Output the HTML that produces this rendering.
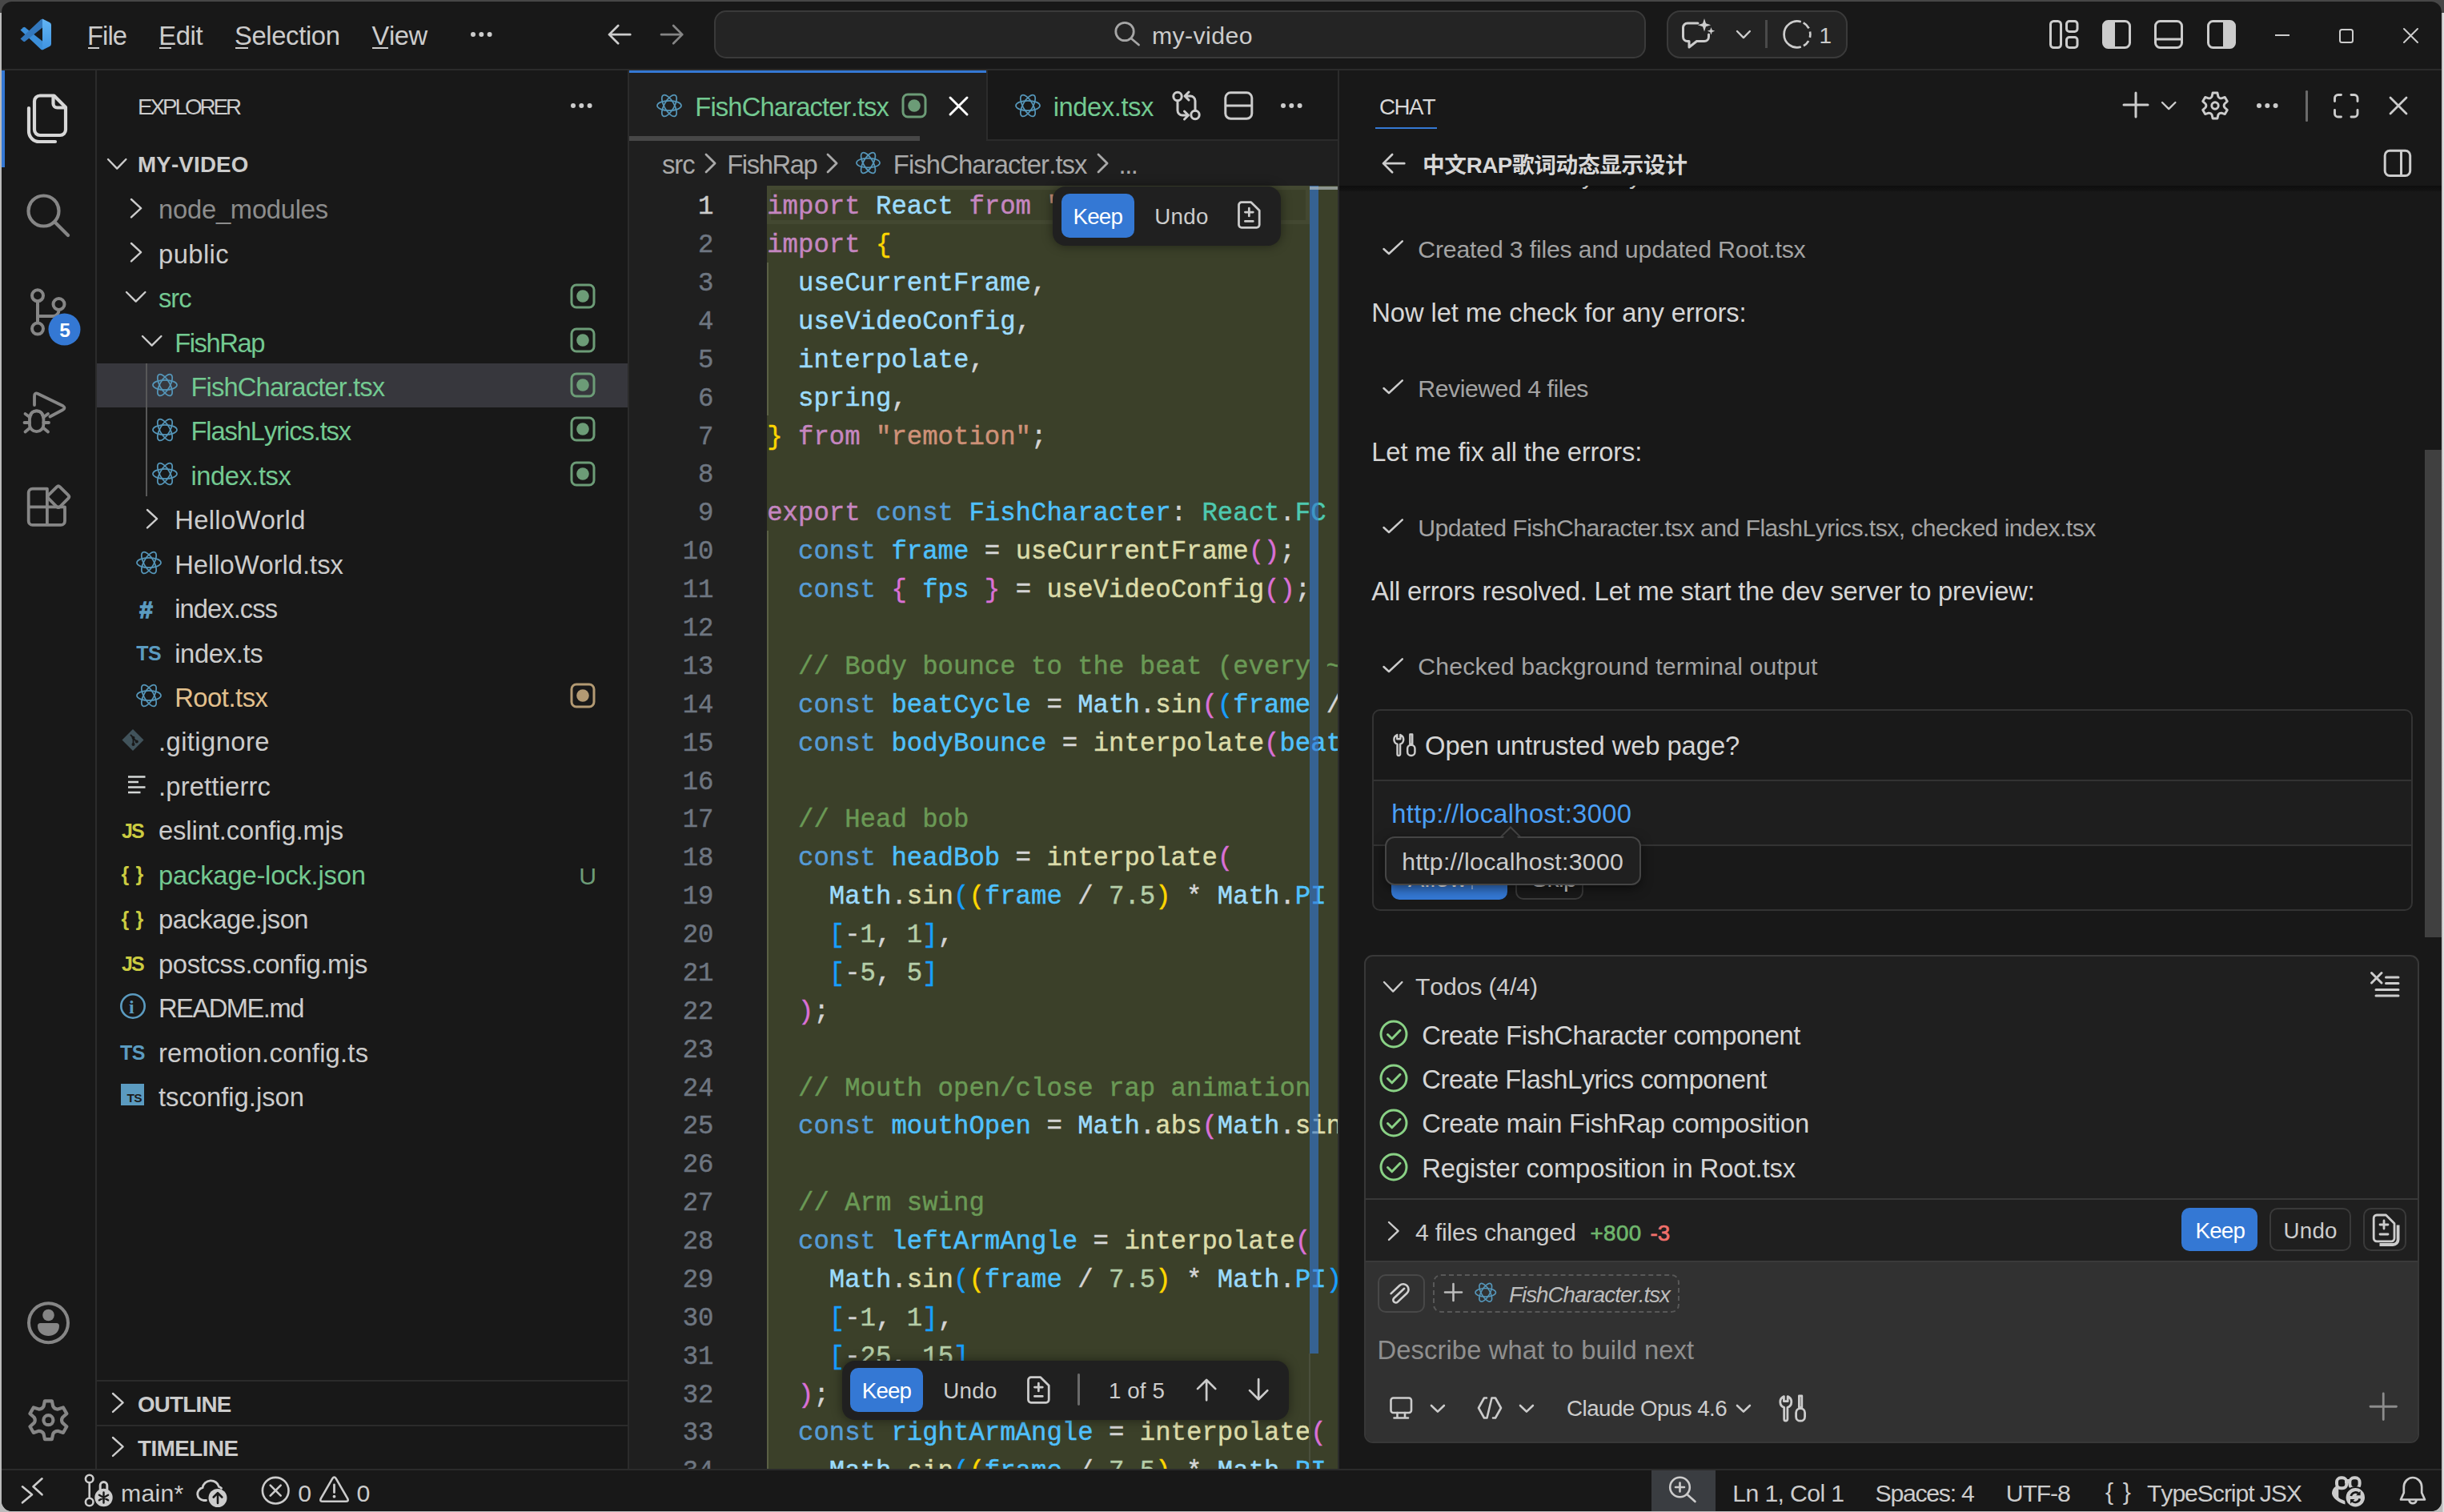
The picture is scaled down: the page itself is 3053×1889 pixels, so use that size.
<!DOCTYPE html><html><head><meta charset="utf-8"><title>VS Code</title><style>
html,body{margin:0;padding:0;}
body{width:3053px;height:1889px;background:#bbbbbb;position:relative;font-kerning:none;-webkit-font-smoothing:antialiased;}
#page{position:absolute;left:0;top:0;width:3053px;height:1889px;overflow:hidden;background:#181818;clip-path:inset(2px 3px 1px 2px round 13px);}
#page div,#page span.s,#page span.m,#page svg{position:absolute;}
#page svg{overflow:visible;}
.s{font-family:"Liberation Sans",sans-serif;line-height:1;white-space:pre;}
.hs{-webkit-text-stroke:1.3px #5b9bc0;}
.sb1{-webkit-text-stroke:0.7px #6eb56c;}.sb2{-webkit-text-stroke:0.7px #f0706c;}
.m{font-family:"Liberation Mono",monospace;line-height:1;white-space:pre;-webkit-text-stroke-width:0.45px;}
#topband{position:absolute;left:0;top:0;width:3053px;height:16px;background:#474747;}#rstrip{position:absolute;left:3049px;top:16px;width:4px;height:1873px;background:linear-gradient(90deg,#b4b4b4 0,#bdbdbd 35%,#cacaca 60%,#ececec 100%);}

</style></head><body><div id="topband"></div><div id="rstrip"></div><div id="page"><div style="left:0px;top:86px;width:3053px;height:2px;background:#2b2b2b;"></div><svg style="left:24px;top:23px;" width="40" height="40" viewBox="0 0 40 40"><defs><linearGradient id="lg1" x1="0" y1="0" x2="0" y2="1"><stop offset="0" stop-color="#62b5f5"/><stop offset="1" stop-color="#3f93e0"/></linearGradient></defs>
<path d="M1.5 14.5 L5.2 11.2 Q6.2 10.4 7.3 11.2 L29 28.5 L29 39.2 Q28.2 39.6 27.2 38.7 Z" fill="#3c8fd9"/>
<path d="M1.5 25.5 L5.2 28.8 Q6.2 29.6 7.3 28.8 L29 11.5 L29 0.8 Q28.2 0.4 27.2 1.3 Z" fill="#3378bd"/>
<path d="M29 0.6 L38 4.9 Q40 5.9 40 8 V32 Q40 34.1 38 35.1 L29 39.4 Z" fill="url(#lg1)"/></svg><span id="t1" class="s " style="left:109.00px;top:28.57px;font-size:32.76px;color:#cccccc;letter-spacing:-0.942px;">File</span><span id="t2" class="s " style="left:198.30px;top:28.57px;font-size:32.76px;color:#cccccc;letter-spacing:-0.393px;">Edit</span><span id="t3" class="s " style="left:293.00px;top:28.57px;font-size:32.76px;color:#cccccc;letter-spacing:-0.357px;">Selection</span><span id="t4" class="s " style="left:464.50px;top:28.57px;font-size:32.76px;color:#cccccc;letter-spacing:-0.458px;">View</span><div style="left:109.5px;top:58.5px;width:14.5px;height:2.6px;background:#cccccc;"></div><div style="left:198.5px;top:58.5px;width:15.5px;height:2.6px;background:#cccccc;"></div><div style="left:293.5px;top:58.5px;width:16.5px;height:2.6px;background:#cccccc;"></div><div style="left:465px;top:58.5px;width:19.5px;height:2.6px;background:#cccccc;"></div><svg style="left:587.4000000000001px;top:39.0px;" width="28.6" height="8.0" viewBox="0 0 28.6 8.0"><circle cx="4.0" cy="4.0" r="3.0" fill="#cccccc"/><circle cx="14.3" cy="4.0" r="3.0" fill="#cccccc"/><circle cx="24.6" cy="4.0" r="3.0" fill="#cccccc"/></svg><svg style="left:758.15px;top:29.65px;" width="31.3" height="26.3" viewBox="0 0 31.3 26.3"><path d="M29.3 13.15 H3 M14.15 2 L3 13.15 L14.15 24.3" fill="none" stroke="#cccccc" stroke-width="2.7" stroke-linecap="round" stroke-linejoin="round"/></svg><svg style="left:823.85px;top:29.65px;" width="31.3" height="26.3" viewBox="0 0 31.3 26.3"><path d="M2 13.15 H28.3 M17.15 2 L28.3 13.15 L17.15 24.3" fill="none" stroke="#858585" stroke-width="2.7" stroke-linecap="round" stroke-linejoin="round"/></svg><div style="left:892.3px;top:13.2px;width:1163.4px;height:59.7px;background:#242424;border:2px solid #3a3a3a;border-radius:15px;box-sizing:border-box;"></div><svg style="left:1390px;top:25px;" width="36" height="34" viewBox="0 0 36 34"><circle cx="15" cy="14.5" r="11.2" fill="none" stroke="#a6a6a6" stroke-width="2.8"/><path d="M23 23 L32.5 31" stroke="#a6a6a6" stroke-width="2.8" stroke-linecap="round"/></svg><span id="t5" class="s " style="left:1439.00px;top:29.80px;font-size:30.24px;color:#cccccc;letter-spacing:0.399px;">my-video</span><div style="left:2081.8px;top:12.9px;width:226.5px;height:60px;background:#232323;border:2px solid #3a3a3a;border-radius:17px;box-sizing:border-box;"></div><svg style="left:2099px;top:22px;" width="46" height="40" viewBox="0 0 46 40"><g fill="none" stroke="#cccccc" stroke-width="3" stroke-linecap="round" stroke-linejoin="round">
<path d="M22 7 H9 a5.5 5.5 0 0 0 -5.5 5.5 V24 a5.5 5.5 0 0 0 5.5 5.5 H11 V37 L20.5 29.5 H30 a5.5 5.5 0 0 0 5.5 -5.5 V21"/></g>
<path d="M30 1 L32 7.2 L38.2 9.2 L32 11.2 L30 17.4 L28 11.2 L21.8 9.2 L28 7.2 Z" fill="#cccccc"/>
<path d="M38.5 12 L39.7 15.6 L43.3 16.8 L39.7 18 L38.5 21.6 L37.3 18 L33.7 16.8 L37.3 15.6 Z" fill="#cccccc"/></svg><svg style="left:2168.05px;top:37.35px;" width="19.9" height="12.1" viewBox="0 0 19.9 12.1"><polyline points="2,2 9.95,10.1 17.9,2" fill="none" stroke="#cccccc" stroke-width="2.4" stroke-linecap="round" stroke-linejoin="round"/></svg><div style="left:2205px;top:25px;width:2.5px;height:35px;background:#4a4a4a;"></div><svg style="left:2225px;top:23px;" width="40" height="40" viewBox="0 0 40 40"><path d="M24.79 4.22 A16.4 16.4 0 1 0 24.79 35.58 M27.70 5.42 A16.4 16.4 0 0 1 34.61 12.45 M36.04 16.49 A16.4 16.4 0 0 1 35.91 23.87 M34.20 28.10 A16.4 16.4 0 0 1 27.95 34.24" fill="none" stroke="#cccccc" stroke-width="2.7"/></svg><span id="t6" class="s " style="left:2272.50px;top:31.00px;font-size:28px;color:#cccccc;letter-spacing:-0.578px;">1</span><svg style="left:2560px;top:25px;" width="36" height="36" viewBox="0 0 36 36"><g fill="none" stroke="#cccccc" stroke-width="3"><rect x="1.5" y="1.5" width="13" height="33" rx="4"/><rect x="21.5" y="1.5" width="13.5" height="13" rx="3.5"/><rect x="21.5" y="21.5" width="13.5" height="13" rx="3.5"/></g></svg><svg style="left:2625.5px;top:25px;" width="36" height="36" viewBox="0 0 36 36"><rect x="1.5" y="1.5" width="33" height="33" rx="6" fill="none" stroke="#cccccc" stroke-width="3"/><path d="M7.5 1.5 H16 V34.5 H7.5 a6 6 0 0 1 -6 -6 V7.5 a6 6 0 0 1 6 -6 Z" fill="#cccccc"/></svg><svg style="left:2691.2px;top:25px;" width="36" height="36" viewBox="0 0 36 36"><rect x="1.5" y="1.5" width="33" height="33" rx="6" fill="none" stroke="#cccccc" stroke-width="3"/><path d="M1.5 24 H34.5" stroke="#cccccc" stroke-width="3"/></svg><svg style="left:2756.8px;top:25px;" width="36" height="36" viewBox="0 0 36 36"><rect x="1.5" y="1.5" width="33" height="33" rx="6" fill="none" stroke="#cccccc" stroke-width="3"/><path d="M28.5 1.5 H20 V34.5 H28.5 a6 6 0 0 0 6 -6 V7.5 a6 6 0 0 0 -6 -6 Z" fill="#cccccc"/></svg><div style="left:2842px;top:43px;width:18px;height:2.2px;background:#cccccc;"></div><div style="left:2922px;top:35.5px;width:18px;height:18px;border:2.2px solid #cccccc;border-radius:3.5px;box-sizing:border-box;"></div><svg style="left:3001.2px;top:33.5px;" width="21" height="21" viewBox="0 0 21 21"><path d="M2 2 L19 19 M19 2 L2 19" stroke="#cccccc" stroke-width="2" stroke-linecap="round" fill="none"/></svg><div style="left:119px;top:88px;width:2px;height:1747px;background:#2b2b2b;"></div><div style="left:2px;top:88px;width:3.5px;height:121px;background:#3478d4;"></div><svg style="left:31px;top:115px;" width="56" height="66" viewBox="0 0 56 66"><g fill="none" stroke="#d7d7d7" stroke-width="4.2" stroke-linecap="round" stroke-linejoin="round">
<path d="M19 4.5 H36.5 L51 19 V47 a7 7 0 0 1 -7 7 H19 a7 7 0 0 1 -7 -7 V11.5 a7 7 0 0 1 7 -7 Z"/>
<path d="M35.5 5 V14.5 a5 5 0 0 0 5 5 H50.5"/>
<path d="M5 20 V49 a13 13 0 0 0 13 13 H38"/></g></svg><svg style="left:31px;top:240px;" width="60" height="60" viewBox="0 0 60 60"><circle cx="23.5" cy="23.5" r="19" fill="none" stroke="#868686" stroke-width="4.2"/><path d="M37.5 37.5 L54 54" stroke="#868686" stroke-width="4.2" stroke-linecap="round"/></svg><svg style="left:34px;top:357px;" width="54" height="66" viewBox="0 0 54 66"><g fill="none" stroke="#868686" stroke-width="4">
<circle cx="13" cy="12.3" r="7"/><circle cx="39.5" cy="23" r="7"/><circle cx="13" cy="53.6" r="7"/>
<path d="M13 19.3 V46.6 M13 38 H32 a7.5 7.5 0 0 0 7.5 -7.5 V30"/></g></svg><svg style="left:60.2px;top:390.5px;" width="41" height="41" viewBox="0 0 41 41"><circle cx="20.5" cy="20.5" r="20" fill="#3478d4"/></svg><span id="t7" class="s " style="left:74.30px;top:400.66px;font-size:24.5px;color:#ffffff;font-weight:700;letter-spacing:-0.141px;">5</span><svg style="left:27px;top:486px;" width="58" height="58" viewBox="0 0 58 58"><g fill="none" stroke="#868686" stroke-width="3.8" stroke-linecap="round" stroke-linejoin="round">
<path d="M16 20 V9 Q16 4 20.5 6 L51.5 21 Q55.5 23.5 51.5 26 L35.5 34.5"/>
<path d="M10 36 a8.7 8.7 0 0 1 17.4 0 V44.5 a8.7 8.7 0 0 1 -17.4 0 Z"/>
<path d="M11.5 32.8 a7.2 5.5 0 0 1 14.4 0"/>
<path d="M10 42 H3.5 M27.4 42 H34 M10.5 48.5 L4.5 53.5 M27 48.5 L33 53.5 M10.5 35.5 L4.5 31 M27 35.5 L33 31"/></g></svg><svg style="left:30px;top:600px;" width="62" height="62" viewBox="0 0 62 62"><g fill="none" stroke="#868686" stroke-width="3.8" stroke-linejoin="round">
<path d="M10.7 10.6 H28.9 V33.4 H51 V50.9 a5 5 0 0 1 -5 5 H10.7 a5 5 0 0 1 -5 -5 V15.6 a5 5 0 0 1 5 -5 Z M5.7 33.4 H28.9 V55.9"/>
<path d="M40.9 8.3 Q42.9 6.3 44.9 8.3 L55.3 18.7 Q57.3 20.7 55.3 22.7 L44.9 33.1 Q42.9 35.1 40.9 33.1 L30.5 22.7 Q28.5 20.7 30.5 18.7 Z"/></g></svg><svg style="left:32px;top:1624px;" width="58" height="58" viewBox="0 0 58 58"><circle cx="28.5" cy="28.7" r="24.5" fill="none" stroke="#868686" stroke-width="4"/><circle cx="28.5" cy="19" r="7.3" fill="#868686"/><path d="M15 32.5 a3.5 3.5 0 0 1 3.5 -3.5 H38.5 a3.5 3.5 0 0 1 3.5 3.5 C42 41 35 45 28.5 45 C22 45 15 41 15 32.5 Z" fill="#868686"/></svg><svg style="left:30px;top:1744px;" width="60" height="60" viewBox="0 0 60 60"><path d="M24.51 13.08 L25.97 6.31 L34.83 6.31 L36.29 13.08 Q38.18 16.72 42.28 16.54 L48.88 14.42 L53.31 22.09 L48.17 26.75 Q45.97 30.20 48.17 33.65 L53.31 38.31 L48.88 45.98 L42.28 43.86 Q38.18 43.68 36.29 47.32 L34.83 54.09 L25.97 54.09 L24.51 47.32 Q22.62 43.68 18.52 43.86 L11.92 45.98 L7.49 38.31 L12.63 33.65 Q14.83 30.20 12.63 26.75 L7.49 22.09 L11.92 14.42 L18.52 16.54 Q22.62 16.72 24.51 13.08 Z" fill="none" stroke="#868686" stroke-width="4.2" stroke-linejoin="round"/><circle cx="30.4" cy="30.2" r="6.0" fill="none" stroke="#868686" stroke-width="4.2"/></svg><div style="left:784px;top:88px;width:2px;height:1747px;background:#2b2b2b;"></div><span id="t8" class="s " style="left:172.00px;top:120.34px;font-size:27.72px;color:#cccccc;letter-spacing:-2.986px;">EXPLORER</span><svg style="left:712.4000000000001px;top:127.69999999999999px;" width="28.6" height="8.0" viewBox="0 0 28.6 8.0"><circle cx="4.0" cy="4.0" r="3.0" fill="#cccccc"/><circle cx="14.3" cy="4.0" r="3.0" fill="#cccccc"/><circle cx="24.6" cy="4.0" r="3.0" fill="#cccccc"/></svg><svg style="left:133.0px;top:197.2px;" width="26.4" height="15.6" viewBox="0 0 26.4 15.6"><polyline points="2,2 13.2,13.6 24.4,2" fill="none" stroke="#cccccc" stroke-width="2.4" stroke-linecap="round" stroke-linejoin="round"/></svg><span id="t9" class="s " style="left:172.00px;top:191.94px;font-size:27.72px;color:#cccccc;font-weight:700;letter-spacing:0.178px;">MY-VIDEO</span><div style="left:121px;top:453.6px;width:663px;height:55.44px;background:#37373d;"></div><div style="left:181.5px;top:453.6px;width:2px;height:166.32px;background:#585858;"></div><svg style="left:161.95px;top:246.84000000000003px;" width="16.1" height="26.4" viewBox="0 0 16.1 26.4"><polyline points="2,2 14.1,13.2 2,24.4" fill="none" stroke="#cccccc" stroke-width="2.4" stroke-linecap="round" stroke-linejoin="round"/></svg><span id="t10" class="s " style="left:198.00px;top:246.21px;font-size:32.76px;color:#8c8c8c;letter-spacing:-0.244px;">node_modules</span><svg style="left:161.95px;top:302.28px;" width="16.1" height="26.4" viewBox="0 0 16.1 26.4"><polyline points="2,2 14.1,13.2 2,24.4" fill="none" stroke="#cccccc" stroke-width="2.4" stroke-linecap="round" stroke-linejoin="round"/></svg><span id="t11" class="s " style="left:198.00px;top:301.65px;font-size:32.76px;color:#cccccc;letter-spacing:0.413px;">public</span><svg style="left:155.8px;top:362.62px;" width="27.4" height="15.6" viewBox="0 0 27.4 15.6"><polyline points="2,2 13.7,13.6 25.4,2" fill="none" stroke="#cccccc" stroke-width="2.4" stroke-linecap="round" stroke-linejoin="round"/></svg><span id="t12" class="s " style="left:198.00px;top:357.09px;font-size:32.76px;color:#73c991;letter-spacing:-1.078px;">src</span><svg style="left:712.3px;top:353.92px;" width="32" height="32" viewBox="0 0 32 32"><rect x="2" y="2" width="28" height="28" rx="6" fill="none" stroke="#6c9c77" stroke-width="3"/><circle cx="16" cy="16" r="7.8" fill="#6c9c77"/></svg><svg style="left:176.0px;top:418.05999999999995px;" width="27.4" height="15.6" viewBox="0 0 27.4 15.6"><polyline points="2,2 13.7,13.6 25.4,2" fill="none" stroke="#cccccc" stroke-width="2.4" stroke-linecap="round" stroke-linejoin="round"/></svg><span id="t13" class="s " style="left:218.20px;top:412.53px;font-size:32.76px;color:#73c991;letter-spacing:-1.437px;">FishRap</span><svg style="left:712.3px;top:409.35999999999996px;" width="32" height="32" viewBox="0 0 32 32"><rect x="2" y="2" width="28" height="28" rx="6" fill="none" stroke="#6c9c77" stroke-width="3"/><circle cx="16" cy="16" r="7.8" fill="#6c9c77"/></svg><svg style="left:188.9px;top:464.3px;" width="33" height="33" viewBox="-17.0 -17.0 33 33"><ellipse cx="0" cy="0" rx="15.00" ry="6.16" transform="rotate(0)" fill="none" stroke="#5596b9" stroke-width="1.75"/><ellipse cx="0" cy="0" rx="15.00" ry="6.16" transform="rotate(60)" fill="none" stroke="#5596b9" stroke-width="1.75"/><ellipse cx="0" cy="0" rx="15.00" ry="6.16" transform="rotate(120)" fill="none" stroke="#5596b9" stroke-width="1.75"/></svg><span id="t14" class="s " style="left:238.40px;top:467.97px;font-size:32.76px;color:#73c991;letter-spacing:-0.870px;">FishCharacter.tsx</span><svg style="left:712.3px;top:464.8px;" width="32" height="32" viewBox="0 0 32 32"><rect x="2" y="2" width="28" height="28" rx="6" fill="none" stroke="#6c9c77" stroke-width="3"/><circle cx="16" cy="16" r="7.8" fill="#6c9c77"/></svg><svg style="left:188.9px;top:519.74px;" width="33" height="33" viewBox="-17.0 -17.0 33 33"><ellipse cx="0" cy="0" rx="15.00" ry="6.16" transform="rotate(0)" fill="none" stroke="#5596b9" stroke-width="1.75"/><ellipse cx="0" cy="0" rx="15.00" ry="6.16" transform="rotate(60)" fill="none" stroke="#5596b9" stroke-width="1.75"/><ellipse cx="0" cy="0" rx="15.00" ry="6.16" transform="rotate(120)" fill="none" stroke="#5596b9" stroke-width="1.75"/></svg><span id="t15" class="s " style="left:238.40px;top:523.41px;font-size:32.76px;color:#73c991;letter-spacing:-1.121px;">FlashLyrics.tsx</span><svg style="left:712.3px;top:520.24px;" width="32" height="32" viewBox="0 0 32 32"><rect x="2" y="2" width="28" height="28" rx="6" fill="none" stroke="#6c9c77" stroke-width="3"/><circle cx="16" cy="16" r="7.8" fill="#6c9c77"/></svg><svg style="left:188.9px;top:575.18px;" width="33" height="33" viewBox="-17.0 -17.0 33 33"><ellipse cx="0" cy="0" rx="15.00" ry="6.16" transform="rotate(0)" fill="none" stroke="#5596b9" stroke-width="1.75"/><ellipse cx="0" cy="0" rx="15.00" ry="6.16" transform="rotate(60)" fill="none" stroke="#5596b9" stroke-width="1.75"/><ellipse cx="0" cy="0" rx="15.00" ry="6.16" transform="rotate(120)" fill="none" stroke="#5596b9" stroke-width="1.75"/></svg><span id="t16" class="s " style="left:238.40px;top:578.85px;font-size:32.76px;color:#73c991;letter-spacing:-0.466px;">index.tsx</span><svg style="left:712.3px;top:575.6800000000001px;" width="32" height="32" viewBox="0 0 32 32"><rect x="2" y="2" width="28" height="28" rx="6" fill="none" stroke="#6c9c77" stroke-width="3"/><circle cx="16" cy="16" r="7.8" fill="#6c9c77"/></svg><svg style="left:182.14999999999998px;top:634.92px;" width="16.1" height="26.4" viewBox="0 0 16.1 26.4"><polyline points="2,2 14.1,13.2 2,24.4" fill="none" stroke="#cccccc" stroke-width="2.4" stroke-linecap="round" stroke-linejoin="round"/></svg><span id="t17" class="s " style="left:218.20px;top:634.29px;font-size:32.76px;color:#cccccc;letter-spacing:0.337px;">HelloWorld</span><svg style="left:168.7px;top:686.06px;" width="33" height="33" viewBox="-17.0 -17.0 33 33"><ellipse cx="0" cy="0" rx="15.00" ry="6.16" transform="rotate(0)" fill="none" stroke="#5596b9" stroke-width="1.75"/><ellipse cx="0" cy="0" rx="15.00" ry="6.16" transform="rotate(60)" fill="none" stroke="#5596b9" stroke-width="1.75"/><ellipse cx="0" cy="0" rx="15.00" ry="6.16" transform="rotate(120)" fill="none" stroke="#5596b9" stroke-width="1.75"/></svg><span id="t18" class="s " style="left:218.20px;top:689.73px;font-size:32.76px;color:#cccccc;letter-spacing:-0.031px;">HelloWorld.tsx</span><span id="t19" class="s hs" style="left:173.70px;top:746.50px;font-size:30px;color:#5b9bc0;font-weight:700;font-style:italic;letter-spacing:6.312px;">#</span><span id="t20" class="s " style="left:218.20px;top:745.17px;font-size:32.76px;color:#cccccc;letter-spacing:-0.953px;">index.css</span><span id="t21" class="s " style="left:170.20px;top:804.18px;font-size:25px;color:#5b9bc0;font-weight:700;letter-spacing:-0.477px;">TS</span><span id="t22" class="s " style="left:218.20px;top:800.61px;font-size:32.76px;color:#cccccc;letter-spacing:-0.357px;">index.ts</span><svg style="left:168.7px;top:852.38px;" width="33" height="33" viewBox="-17.0 -17.0 33 33"><ellipse cx="0" cy="0" rx="15.00" ry="6.16" transform="rotate(0)" fill="none" stroke="#5596b9" stroke-width="1.75"/><ellipse cx="0" cy="0" rx="15.00" ry="6.16" transform="rotate(60)" fill="none" stroke="#5596b9" stroke-width="1.75"/><ellipse cx="0" cy="0" rx="15.00" ry="6.16" transform="rotate(120)" fill="none" stroke="#5596b9" stroke-width="1.75"/></svg><span id="t23" class="s " style="left:218.20px;top:856.05px;font-size:32.76px;color:#e2c08d;letter-spacing:-0.489px;">Root.tsx</span><svg style="left:712.3px;top:852.88px;" width="32" height="32" viewBox="0 0 32 32"><rect x="2" y="2" width="28" height="28" rx="6" fill="none" stroke="#b39a73" stroke-width="3"/><circle cx="16" cy="16" r="7.8" fill="#b39a73"/></svg><svg style="left:150.5px;top:909.82px;" width="30" height="29" viewBox="0 0 30 29"><path d="M15 1 L28.5 14.5 L15 28 L1.5 14.5 Z" fill="#41535b"/><g stroke="#181818" stroke-width="1.8" fill="none"><path d="M12 8 L15.5 11.5 V20 M15.5 12.5 L19.5 16.2"/></g><circle cx="15.5" cy="11.7" r="2" fill="#181818"/><circle cx="15.5" cy="20" r="2" fill="#181818"/><circle cx="19.8" cy="16.5" r="2" fill="#181818"/></svg><span id="t24" class="s " style="left:198.00px;top:911.49px;font-size:32.76px;color:#cccccc;letter-spacing:0.413px;">.gitignore</span><svg style="left:159.0px;top:967.7600000000001px;" width="24" height="24" viewBox="0 0 24 24"><g stroke="#d4d7d6" stroke-width="2.6"><path d="M1 2.5 H22.5 M1 9 H14 M1 15.5 H22.5 M1 22 H16.5"/></g></svg><span id="t25" class="s " style="left:198.00px;top:966.93px;font-size:32.76px;color:#cccccc;letter-spacing:0.162px;">.prettierrc</span><span id="t26" class="s " style="left:152.00px;top:1025.94px;font-size:25px;color:#cbcb41;font-weight:700;letter-spacing:-1.797px;">JS</span><span id="t27" class="s " style="left:198.00px;top:1022.37px;font-size:32.76px;color:#cccccc;letter-spacing:-0.109px;">eslint.config.mjs</span><span id="t28" class="s " style="left:151.50px;top:1080.38px;font-size:25px;color:#cbcb41;font-weight:700;letter-spacing:0.698px;">{ }</span><span id="t29" class="s " style="left:198.00px;top:1077.81px;font-size:32.76px;color:#73c991;letter-spacing:-0.201px;">package-lock.json</span><span id="t30" class="s " style="left:723.30px;top:1079.94px;font-size:30.24px;color:#6c9c77;letter-spacing:-3.344px;">U</span><span id="t31" class="s " style="left:151.50px;top:1135.82px;font-size:25px;color:#cbcb41;font-weight:700;letter-spacing:0.698px;">{ }</span><span id="t32" class="s " style="left:198.00px;top:1133.25px;font-size:32.76px;color:#cccccc;letter-spacing:-0.492px;">package.json</span><span id="t33" class="s " style="left:152.00px;top:1192.26px;font-size:25px;color:#cbcb41;font-weight:700;letter-spacing:-1.797px;">JS</span><span id="t34" class="s " style="left:198.00px;top:1188.69px;font-size:32.76px;color:#cccccc;letter-spacing:-0.367px;">postcss.config.mjs</span><svg style="left:148.5px;top:1240.46px;" width="34" height="34" viewBox="0 0 34 34"><circle cx="17" cy="17" r="14.7" fill="none" stroke="#5b9bc0" stroke-width="2.6"/></svg><span id="t35" class="s " style="left:160.90px;top:1245.54px;font-size:24px;color:#5b9bc0;font-weight:700;font-family:'Liberation Serif',serif;letter-spacing:2.828px;">i</span><span id="t36" class="s " style="left:198.00px;top:1244.13px;font-size:32.76px;color:#cccccc;letter-spacing:-1.543px;">README.md</span><span id="t37" class="s " style="left:150.00px;top:1303.14px;font-size:25px;color:#5b9bc0;font-weight:700;letter-spacing:-0.477px;">TS</span><span id="t38" class="s " style="left:198.00px;top:1299.57px;font-size:32.76px;color:#cccccc;letter-spacing:0.209px;">remotion.config.ts</span><div style="left:151.0px;top:1354.34px;width:28.5px;height:26.5px;background:#5b9bc0;"></div><span id="t39" class="s " style="left:158.50px;top:1364.12px;font-size:15.5px;color:#1b1b1b;font-weight:700;letter-spacing:-0.656px;">TS</span><span id="t40" class="s " style="left:198.00px;top:1355.01px;font-size:32.76px;color:#cccccc;letter-spacing:-0.005px;">tsconfig.json</span><div style="left:121px;top:1724px;width:663px;height:2px;background:#2b2b2b;"></div><div style="left:121px;top:1779.5px;width:663px;height:2px;background:#2b2b2b;"></div><svg style="left:138.7px;top:1738.55px;" width="16.6" height="26.9" viewBox="0 0 16.6 26.9"><polyline points="2,2 14.6,13.45 2,24.9" fill="none" stroke="#cccccc" stroke-width="2.4" stroke-linecap="round" stroke-linejoin="round"/></svg><span id="t41" class="s " style="left:172.00px;top:1740.94px;font-size:27.72px;color:#cccccc;font-weight:700;letter-spacing:-0.737px;">OUTLINE</span><svg style="left:138.7px;top:1793.55px;" width="16.6" height="26.9" viewBox="0 0 16.6 26.9"><polyline points="2,2 14.6,13.45 2,24.9" fill="none" stroke="#cccccc" stroke-width="2.4" stroke-linecap="round" stroke-linejoin="round"/></svg><span id="t42" class="s " style="left:172.00px;top:1796.14px;font-size:27.72px;color:#cccccc;font-weight:700;letter-spacing:-0.482px;">TIMELINE</span><div style="left:786px;top:88px;width:885px;height:1747px;background:#1f1f1f;"></div><div style="left:1232px;top:88px;width:439px;height:86px;background:#181818;"></div><div style="left:1232px;top:88px;width:2px;height:88px;background:#2b2b2b;"></div><div style="left:1232px;top:173.8px;width:439px;height:2.2px;background:#2b2b2b;"></div><div style="left:786px;top:88px;width:446px;height:3.3px;background:#3478d4;"></div><svg style="left:819.0px;top:114.5px;" width="33" height="33" viewBox="-17.0 -17.0 33 33"><ellipse cx="0" cy="0" rx="15.00" ry="6.16" transform="rotate(0)" fill="none" stroke="#5596b9" stroke-width="1.75"/><ellipse cx="0" cy="0" rx="15.00" ry="6.16" transform="rotate(60)" fill="none" stroke="#5596b9" stroke-width="1.75"/><ellipse cx="0" cy="0" rx="15.00" ry="6.16" transform="rotate(120)" fill="none" stroke="#5596b9" stroke-width="1.75"/></svg><span id="t43" class="s " style="left:868.30px;top:117.67px;font-size:32.76px;color:#73c991;letter-spacing:-0.870px;">FishCharacter.tsx</span><svg style="left:1125.6px;top:116px;" width="32" height="32" viewBox="0 0 32 32"><rect x="2" y="2" width="28" height="28" rx="6" fill="none" stroke="#6c9c77" stroke-width="3"/><circle cx="16" cy="16" r="7.8" fill="#6c9c77"/></svg><svg style="left:1184.7px;top:119.9px;" width="25" height="25" viewBox="0 0 25 25"><path d="M2 2 L23 23 M23 2 L2 23" stroke="#ffffff" stroke-width="3" stroke-linecap="round" fill="none"/></svg><div style="left:786px;top:169.5px;width:363px;height:6.5px;background:#474747;"></div><svg style="left:1267.2px;top:114.5px;" width="33" height="33" viewBox="-17.0 -17.0 33 33"><ellipse cx="0" cy="0" rx="15.00" ry="6.16" transform="rotate(0)" fill="none" stroke="#5596b9" stroke-width="1.75"/><ellipse cx="0" cy="0" rx="15.00" ry="6.16" transform="rotate(60)" fill="none" stroke="#5596b9" stroke-width="1.75"/><ellipse cx="0" cy="0" rx="15.00" ry="6.16" transform="rotate(120)" fill="none" stroke="#5596b9" stroke-width="1.75"/></svg><span id="t44" class="s " style="left:1315.80px;top:117.67px;font-size:32.76px;color:#73c991;letter-spacing:-0.466px;">index.tsx</span><svg style="left:1462px;top:112px;" width="40" height="40" viewBox="0 0 40 40"><g fill="none" stroke="#cccccc" stroke-width="3" stroke-linecap="round" stroke-linejoin="round">
<circle cx="9" cy="8.5" r="5.2"/><circle cx="31" cy="31.5" r="5.2"/>
<path d="M9 14 V26 a6 6 0 0 0 6 6 H22 M17.5 27 L22.5 32 L17.5 37"/>
<path d="M31 26 V14 a6 6 0 0 0 -6 -6 H18.5 M23 3 L18 8 L23 13"/></g></svg><svg style="left:1529px;top:114px;" width="37" height="37" viewBox="0 0 37 37"><rect x="1.8" y="1.8" width="33" height="32.5" rx="6.5" fill="none" stroke="#cccccc" stroke-width="3"/><path d="M2 18 H35" stroke="#cccccc" stroke-width="3"/></svg><svg style="left:1598.7px;top:127.69999999999999px;" width="28.6" height="8.0" viewBox="0 0 28.6 8.0"><circle cx="4.0" cy="4.0" r="3.0" fill="#cccccc"/><circle cx="14.3" cy="4.0" r="3.0" fill="#cccccc"/><circle cx="24.6" cy="4.0" r="3.0" fill="#cccccc"/></svg><span id="t45" class="s " style="left:827.00px;top:190.27px;font-size:32.76px;color:#a9a9a9;letter-spacing:-1.078px;">src</span><svg style="left:880.45px;top:191.35000000000002px;" width="15.1" height="25.9" viewBox="0 0 15.1 25.9"><polyline points="2,2 13.1,12.95 2,23.9" fill="none" stroke="#a9a9a9" stroke-width="2.8" stroke-linecap="round" stroke-linejoin="round"/></svg><span id="t46" class="s " style="left:908.30px;top:190.27px;font-size:32.76px;color:#a9a9a9;letter-spacing:-1.437px;">FishRap</span><svg style="left:1032.45px;top:191.35000000000002px;" width="15.1" height="25.9" viewBox="0 0 15.1 25.9"><polyline points="2,2 13.1,12.95 2,23.9" fill="none" stroke="#a9a9a9" stroke-width="2.8" stroke-linecap="round" stroke-linejoin="round"/></svg><svg style="left:1068.0px;top:187.3px;" width="32" height="32" viewBox="-16.5 -16.5 32 32"><ellipse cx="0" cy="0" rx="14.50" ry="5.97" transform="rotate(0)" fill="none" stroke="#5596b9" stroke-width="1.75"/><ellipse cx="0" cy="0" rx="14.50" ry="5.97" transform="rotate(60)" fill="none" stroke="#5596b9" stroke-width="1.75"/><ellipse cx="0" cy="0" rx="14.50" ry="5.97" transform="rotate(120)" fill="none" stroke="#5596b9" stroke-width="1.75"/></svg><span id="t47" class="s " style="left:1115.80px;top:190.27px;font-size:32.76px;color:#a9a9a9;letter-spacing:-0.870px;">FishCharacter.tsx</span><svg style="left:1369.95px;top:191.35000000000002px;" width="15.1" height="25.9" viewBox="0 0 15.1 25.9"><polyline points="2,2 13.1,12.95 2,23.9" fill="none" stroke="#a9a9a9" stroke-width="2.8" stroke-linecap="round" stroke-linejoin="round"/></svg><span id="t48" class="s " style="left:1397.50px;top:190.27px;font-size:32.76px;color:#a9a9a9;letter-spacing:-1.438px;">...</span><div style="left:958px;top:231.84px;width:713px;height:1603.16px;background:#3b4029;"></div><div style="left:958px;top:231.84px;width:678px;height:48.38px;box-sizing:border-box;border:5px solid #434831;"></div><div style="left:958px;top:327.6px;width:2px;height:191.52px;background:#5a6045;"></div><div style="left:958px;top:662.76px;width:2px;height:1484.28px;background:#5a6045;"></div><div style="left:786px;top:231.84px;width:885px;height:1603.16px;overflow:hidden;"><span class="m" style="left:86.09px;top:11.48px;font-size:32.345px;color:#cccccc;">1</span><span class="m" style="left:172.20px;top:11.48px;font-size:32.345px;"><span style="color:#c586c0">import</span><span style="color:#d4d4d4"> </span><span style="color:#9cdcfe">React</span><span style="color:#d4d4d4"> </span><span style="color:#c586c0">from</span><span style="color:#d4d4d4"> </span><span style="color:#ce9178">&quot;react&quot;</span><span style="color:#d4d4d4">;</span></span><span class="m" style="left:86.09px;top:59.36px;font-size:32.345px;color:#6e7681;">2</span><span class="m" style="left:172.20px;top:59.36px;font-size:32.345px;"><span style="color:#c586c0">import</span><span style="color:#d4d4d4"> </span><span style="color:#ffd700">{</span></span><span class="m" style="left:86.09px;top:107.24px;font-size:32.345px;color:#6e7681;">3</span><span class="m" style="left:172.20px;top:107.24px;font-size:32.345px;"><span style="color:#9cdcfe">  useCurrentFrame</span><span style="color:#d4d4d4">,</span></span><span class="m" style="left:86.09px;top:155.12px;font-size:32.345px;color:#6e7681;">4</span><span class="m" style="left:172.20px;top:155.12px;font-size:32.345px;"><span style="color:#9cdcfe">  useVideoConfig</span><span style="color:#d4d4d4">,</span></span><span class="m" style="left:86.09px;top:203.00px;font-size:32.345px;color:#6e7681;">5</span><span class="m" style="left:172.20px;top:203.00px;font-size:32.345px;"><span style="color:#9cdcfe">  interpolate</span><span style="color:#d4d4d4">,</span></span><span class="m" style="left:86.09px;top:250.88px;font-size:32.345px;color:#6e7681;">6</span><span class="m" style="left:172.20px;top:250.88px;font-size:32.345px;"><span style="color:#9cdcfe">  spring</span><span style="color:#d4d4d4">,</span></span><span class="m" style="left:86.09px;top:298.76px;font-size:32.345px;color:#6e7681;">7</span><span class="m" style="left:172.20px;top:298.76px;font-size:32.345px;"><span style="color:#ffd700">}</span><span style="color:#d4d4d4"> </span><span style="color:#c586c0">from</span><span style="color:#d4d4d4"> </span><span style="color:#ce9178">&quot;remotion&quot;</span><span style="color:#d4d4d4">;</span></span><span class="m" style="left:86.09px;top:346.64px;font-size:32.345px;color:#6e7681;">8</span><span class="m" style="left:86.09px;top:394.52px;font-size:32.345px;color:#6e7681;">9</span><span class="m" style="left:172.20px;top:394.52px;font-size:32.345px;"><span style="color:#c586c0">export</span><span style="color:#d4d4d4"> </span><span style="color:#569cd6">const</span><span style="color:#d4d4d4"> </span><span style="color:#4fc1ff">FishCharacter</span><span style="color:#d4d4d4">: </span><span style="color:#4ec9b0">React</span><span style="color:#d4d4d4">.</span><span style="color:#4ec9b0">FC</span><span style="color:#d4d4d4"> = </span><span style="color:#ffd700">(</span><span style="color:#ffd700">)</span><span style="color:#d4d4d4"> </span><span style="color:#569cd6">=&gt;</span><span style="color:#d4d4d4"> </span><span style="color:#ffd700">{</span></span><span class="m" style="left:66.68px;top:442.40px;font-size:32.345px;color:#6e7681;">10</span><span class="m" style="left:172.20px;top:442.40px;font-size:32.345px;"><span style="color:#569cd6">  const</span><span style="color:#d4d4d4"> </span><span style="color:#4fc1ff">frame</span><span style="color:#d4d4d4"> = </span><span style="color:#dcdcaa">useCurrentFrame</span><span style="color:#da70d6">()</span><span style="color:#d4d4d4">;</span></span><span class="m" style="left:66.68px;top:490.28px;font-size:32.345px;color:#6e7681;">11</span><span class="m" style="left:172.20px;top:490.28px;font-size:32.345px;"><span style="color:#569cd6">  const</span><span style="color:#d4d4d4"> </span><span style="color:#da70d6">{</span><span style="color:#d4d4d4"> </span><span style="color:#4fc1ff">fps</span><span style="color:#d4d4d4"> </span><span style="color:#da70d6">}</span><span style="color:#d4d4d4"> = </span><span style="color:#dcdcaa">useVideoConfig</span><span style="color:#da70d6">()</span><span style="color:#d4d4d4">;</span></span><span class="m" style="left:66.68px;top:538.16px;font-size:32.345px;color:#6e7681;">12</span><span class="m" style="left:66.68px;top:586.04px;font-size:32.345px;color:#6e7681;">13</span><span class="m" style="left:172.20px;top:586.04px;font-size:32.345px;"><span style="color:#6a9955">  // Body bounce to the beat (every ~15 frames)</span></span><span class="m" style="left:66.68px;top:633.92px;font-size:32.345px;color:#6e7681;">14</span><span class="m" style="left:172.20px;top:633.92px;font-size:32.345px;"><span style="color:#569cd6">  const</span><span style="color:#d4d4d4"> </span><span style="color:#4fc1ff">beatCycle</span><span style="color:#d4d4d4"> = </span><span style="color:#9cdcfe">Math</span><span style="color:#d4d4d4">.</span><span style="color:#dcdcaa">sin</span><span style="color:#da70d6">(</span><span style="color:#179fff">(</span><span style="color:#4fc1ff">frame</span><span style="color:#d4d4d4"> / </span><span style="color:#b5cea8">7.5</span><span style="color:#179fff">)</span><span style="color:#d4d4d4"> * </span><span style="color:#9cdcfe">Math</span><span style="color:#d4d4d4">.</span><span style="color:#4fc1ff">PI</span><span style="color:#da70d6">)</span><span style="color:#d4d4d4">;</span></span><span class="m" style="left:66.68px;top:681.80px;font-size:32.345px;color:#6e7681;">15</span><span class="m" style="left:172.20px;top:681.80px;font-size:32.345px;"><span style="color:#569cd6">  const</span><span style="color:#d4d4d4"> </span><span style="color:#4fc1ff">bodyBounce</span><span style="color:#d4d4d4"> = </span><span style="color:#dcdcaa">interpolate</span><span style="color:#da70d6">(</span><span style="color:#4fc1ff">beatCycle</span><span style="color:#d4d4d4">, </span><span style="color:#179fff">[</span><span style="color:#d4d4d4">-</span><span style="color:#b5cea8">1</span><span style="color:#d4d4d4">, </span><span style="color:#b5cea8">1</span><span style="color:#179fff">]</span></span><span class="m" style="left:66.68px;top:729.68px;font-size:32.345px;color:#6e7681;">16</span><span class="m" style="left:66.68px;top:777.56px;font-size:32.345px;color:#6e7681;">17</span><span class="m" style="left:172.20px;top:777.56px;font-size:32.345px;"><span style="color:#6a9955">  // Head bob</span></span><span class="m" style="left:66.68px;top:825.44px;font-size:32.345px;color:#6e7681;">18</span><span class="m" style="left:172.20px;top:825.44px;font-size:32.345px;"><span style="color:#569cd6">  const</span><span style="color:#d4d4d4"> </span><span style="color:#4fc1ff">headBob</span><span style="color:#d4d4d4"> = </span><span style="color:#dcdcaa">interpolate</span><span style="color:#da70d6">(</span></span><span class="m" style="left:66.68px;top:873.32px;font-size:32.345px;color:#6e7681;">19</span><span class="m" style="left:172.20px;top:873.32px;font-size:32.345px;"><span style="color:#9cdcfe">    Math</span><span style="color:#d4d4d4">.</span><span style="color:#dcdcaa">sin</span><span style="color:#179fff">(</span><span style="color:#ffd700">(</span><span style="color:#4fc1ff">frame</span><span style="color:#d4d4d4"> / </span><span style="color:#b5cea8">7.5</span><span style="color:#ffd700">)</span><span style="color:#d4d4d4"> * </span><span style="color:#9cdcfe">Math</span><span style="color:#d4d4d4">.</span><span style="color:#4fc1ff">PI</span><span style="color:#d4d4d4"> + </span><span style="color:#b5cea8">0.5</span><span style="color:#179fff">)</span><span style="color:#d4d4d4">,</span></span><span class="m" style="left:66.68px;top:921.20px;font-size:32.345px;color:#6e7681;">20</span><span class="m" style="left:172.20px;top:921.20px;font-size:32.345px;"><span style="color:#179fff">    [</span><span style="color:#d4d4d4">-</span><span style="color:#b5cea8">1</span><span style="color:#d4d4d4">, </span><span style="color:#b5cea8">1</span><span style="color:#179fff">]</span><span style="color:#d4d4d4">,</span></span><span class="m" style="left:66.68px;top:969.08px;font-size:32.345px;color:#6e7681;">21</span><span class="m" style="left:172.20px;top:969.08px;font-size:32.345px;"><span style="color:#179fff">    [</span><span style="color:#d4d4d4">-</span><span style="color:#b5cea8">5</span><span style="color:#d4d4d4">, </span><span style="color:#b5cea8">5</span><span style="color:#179fff">]</span></span><span class="m" style="left:66.68px;top:1016.96px;font-size:32.345px;color:#6e7681;">22</span><span class="m" style="left:172.20px;top:1016.96px;font-size:32.345px;"><span style="color:#da70d6">  )</span><span style="color:#d4d4d4">;</span></span><span class="m" style="left:66.68px;top:1064.84px;font-size:32.345px;color:#6e7681;">23</span><span class="m" style="left:66.68px;top:1112.72px;font-size:32.345px;color:#6e7681;">24</span><span class="m" style="left:172.20px;top:1112.72px;font-size:32.345px;"><span style="color:#6a9955">  // Mouth open/close rap animation</span></span><span class="m" style="left:66.68px;top:1160.60px;font-size:32.345px;color:#6e7681;">25</span><span class="m" style="left:172.20px;top:1160.60px;font-size:32.345px;"><span style="color:#569cd6">  const</span><span style="color:#d4d4d4"> </span><span style="color:#4fc1ff">mouthOpen</span><span style="color:#d4d4d4"> = </span><span style="color:#9cdcfe">Math</span><span style="color:#d4d4d4">.</span><span style="color:#dcdcaa">abs</span><span style="color:#da70d6">(</span><span style="color:#9cdcfe">Math</span><span style="color:#d4d4d4">.</span><span style="color:#dcdcaa">sin</span><span style="color:#179fff">(</span><span style="color:#4fc1ff">frame</span></span><span class="m" style="left:66.68px;top:1208.48px;font-size:32.345px;color:#6e7681;">26</span><span class="m" style="left:66.68px;top:1256.36px;font-size:32.345px;color:#6e7681;">27</span><span class="m" style="left:172.20px;top:1256.36px;font-size:32.345px;"><span style="color:#6a9955">  // Arm swing</span></span><span class="m" style="left:66.68px;top:1304.24px;font-size:32.345px;color:#6e7681;">28</span><span class="m" style="left:172.20px;top:1304.24px;font-size:32.345px;"><span style="color:#569cd6">  const</span><span style="color:#d4d4d4"> </span><span style="color:#4fc1ff">leftArmAngle</span><span style="color:#d4d4d4"> = </span><span style="color:#dcdcaa">interpolate</span><span style="color:#da70d6">(</span></span><span class="m" style="left:66.68px;top:1352.12px;font-size:32.345px;color:#6e7681;">29</span><span class="m" style="left:172.20px;top:1352.12px;font-size:32.345px;"><span style="color:#9cdcfe">    Math</span><span style="color:#d4d4d4">.</span><span style="color:#dcdcaa">sin</span><span style="color:#179fff">(</span><span style="color:#ffd700">(</span><span style="color:#4fc1ff">frame</span><span style="color:#d4d4d4"> / </span><span style="color:#b5cea8">7.5</span><span style="color:#ffd700">)</span><span style="color:#d4d4d4"> * </span><span style="color:#9cdcfe">Math</span><span style="color:#d4d4d4">.</span><span style="color:#4fc1ff">PI</span><span style="color:#179fff">)</span><span style="color:#d4d4d4">,</span></span><span class="m" style="left:66.68px;top:1400.00px;font-size:32.345px;color:#6e7681;">30</span><span class="m" style="left:172.20px;top:1400.00px;font-size:32.345px;"><span style="color:#179fff">    [</span><span style="color:#d4d4d4">-</span><span style="color:#b5cea8">1</span><span style="color:#d4d4d4">, </span><span style="color:#b5cea8">1</span><span style="color:#179fff">]</span><span style="color:#d4d4d4">,</span></span><span class="m" style="left:66.68px;top:1447.88px;font-size:32.345px;color:#6e7681;">31</span><span class="m" style="left:172.20px;top:1447.88px;font-size:32.345px;"><span style="color:#179fff">    [</span><span style="color:#d4d4d4">-</span><span style="color:#b5cea8">25</span><span style="color:#d4d4d4">, </span><span style="color:#b5cea8">15</span><span style="color:#179fff">]</span></span><span class="m" style="left:66.68px;top:1495.76px;font-size:32.345px;color:#6e7681;">32</span><span class="m" style="left:172.20px;top:1495.76px;font-size:32.345px;"><span style="color:#da70d6">  )</span><span style="color:#d4d4d4">;</span></span><span class="m" style="left:66.68px;top:1543.64px;font-size:32.345px;color:#6e7681;">33</span><span class="m" style="left:172.20px;top:1543.64px;font-size:32.345px;"><span style="color:#569cd6">  const</span><span style="color:#d4d4d4"> </span><span style="color:#4fc1ff">rightArmAngle</span><span style="color:#d4d4d4"> = </span><span style="color:#dcdcaa">interpolate</span><span style="color:#da70d6">(</span></span><span class="m" style="left:66.68px;top:1591.52px;font-size:32.345px;color:#6e7681;">34</span><span class="m" style="left:172.20px;top:1591.52px;font-size:32.345px;"><span style="color:#9cdcfe">    Math</span><span style="color:#d4d4d4">.</span><span style="color:#dcdcaa">sin</span><span style="color:#179fff">(</span><span style="color:#ffd700">(</span><span style="color:#4fc1ff">frame</span><span style="color:#d4d4d4"> / </span><span style="color:#b5cea8">7.5</span><span style="color:#ffd700">)</span><span style="color:#d4d4d4"> * </span><span style="color:#9cdcfe">Math</span><span style="color:#d4d4d4">.</span><span style="color:#4fc1ff">PI</span><span style="color:#d4d4d4"> + </span><span style="color:#b5cea8">1</span><span style="color:#179fff">)</span><span style="color:#d4d4d4">,</span></span></div><div style="left:1636px;top:231.84px;width:11.3px;height:1459.16px;background:rgba(52,120,212,0.62);"></div><div style="left:1635px;top:1691px;width:1.6px;height:144px;background:#4a4f3c;"></div><div style="left:1636px;top:232.84px;width:34.5px;height:4.5px;background:rgba(190,200,205,0.62);"></div><div style="left:1315px;top:232.5px;width:285px;height:74.5px;background:#202020;border-radius:16px;box-shadow:0 0 14px rgba(0,0,0,.45);"></div><div style="left:1325.8px;top:242px;width:91.4px;height:55px;background:#3478d4;border-radius:10px;"></div><span id="t49" class="s " style="left:1340.60px;top:257.34px;font-size:27.72px;color:#ffffff;letter-spacing:-0.835px;">Keep</span><span id="t50" class="s " style="left:1442.30px;top:257.34px;font-size:27.72px;color:#cccccc;letter-spacing:0.251px;">Undo</span><svg style="left:1546.3px;top:251.3px;" width="28.7" height="35" viewBox="0 0 29 35"><g fill="none" stroke="#cccccc" stroke-width="2.8" stroke-linecap="round" stroke-linejoin="round"><path d="M5 1.5 H17 L27.5 12 V30 a3.5 3.5 0 0 1 -3.5 3.5 H5 a3.5 3.5 0 0 1 -3.5 -3.5 V5 a3.5 3.5 0 0 1 3.5 -3.5 Z"/><path d="M14.5 9 V19 M9.5 14 H19.5 M9.5 25.5 H19.5"/></g></svg><div style="left:1052px;top:1699.5px;width:557.5px;height:74px;background:#202020;border-radius:16px;box-shadow:0 0 14px rgba(0,0,0,.45);"></div><div style="left:1062px;top:1709px;width:91px;height:55px;background:#3478d4;border-radius:10px;"></div><span id="t51" class="s " style="left:1076.80px;top:1724.34px;font-size:27.72px;color:#ffffff;letter-spacing:-0.835px;">Keep</span><span id="t52" class="s " style="left:1178.30px;top:1724.34px;font-size:27.72px;color:#cccccc;letter-spacing:0.251px;">Undo</span><svg style="left:1283px;top:1718.5px;" width="28.7" height="35" viewBox="0 0 29 35"><g fill="none" stroke="#cccccc" stroke-width="2.8" stroke-linecap="round" stroke-linejoin="round"><path d="M5 1.5 H17 L27.5 12 V30 a3.5 3.5 0 0 1 -3.5 3.5 H5 a3.5 3.5 0 0 1 -3.5 -3.5 V5 a3.5 3.5 0 0 1 3.5 -3.5 Z"/><path d="M14.5 9 V19 M9.5 14 H19.5 M9.5 25.5 H19.5"/></g></svg><div style="left:1346px;top:1716px;width:2.8px;height:40px;background:#6a6a6a;border-radius:1.4px;"></div><span id="t53" class="s " style="left:1385.00px;top:1723.94px;font-size:27.72px;color:#cccccc;letter-spacing:0.105px;">1 of 5</span><svg style="left:1493.85px;top:1720.55px;" width="26.3" height="30.3" viewBox="0 0 26.3 30.3"><path d="M13.15 28.3 V3 M2 14.15 L13.15 3 L24.3 14.15" fill="none" stroke="#cccccc" stroke-width="2.7" stroke-linecap="round" stroke-linejoin="round"/></svg><svg style="left:1559.1499999999999px;top:1721.1499999999999px;" width="26.3" height="30.3" viewBox="0 0 26.3 30.3"><path d="M13.15 2 V27.3 M2 16.15 L13.15 27.3 L24.3 16.15" fill="none" stroke="#cccccc" stroke-width="2.7" stroke-linecap="round" stroke-linejoin="round"/></svg><div style="left:1671px;top:88px;width:2px;height:1747px;background:#2b2b2b;"></div><div style="left:1673px;top:232px;width:1377px;height:8px;background:linear-gradient(180deg,#0e0e0e 0,#121212 70%,#181818 100%);"></div><div style="left:1673px;top:232px;width:1377px;height:10px;overflow:hidden;"><span class="s" style="left:303px;top:-27.5px;font-size:30.24px;color:#c4c4c4;white-space:pre">y</span><span class="s" style="left:362px;top:-27.5px;font-size:30.24px;color:#c4c4c4;white-space:pre">y</span></div><svg style="left:1724.7px;top:297.8px;" width="30" height="22" viewBox="0 0 30 22"><polyline points="3.5,13 10,19 26.8,3.3" fill="none" stroke="#cccccc" stroke-width="2.5" stroke-linecap="round" stroke-linejoin="round"/></svg><span id="t54" class="s " style="left:1771.30px;top:296.50px;font-size:30.24px;color:#a3a3a3;letter-spacing:-0.181px;">Created 3 files and updated Root.tsx</span><span id="t55" class="s " style="left:1713.30px;top:375.07px;font-size:32.76px;color:#d6d6d6;letter-spacing:-0.096px;">Now let me check for any errors:</span><svg style="left:1724.7px;top:472.0px;" width="30" height="22" viewBox="0 0 30 22"><polyline points="3.5,13 10,19 26.8,3.3" fill="none" stroke="#cccccc" stroke-width="2.5" stroke-linecap="round" stroke-linejoin="round"/></svg><span id="t56" class="s " style="left:1771.30px;top:470.70px;font-size:30.24px;color:#a3a3a3;letter-spacing:-0.470px;">Reviewed 4 files</span><span id="t57" class="s " style="left:1713.30px;top:548.67px;font-size:32.76px;color:#d6d6d6;letter-spacing:-0.162px;">Let me fix all the errors:</span><svg style="left:1724.7px;top:646.0px;" width="30" height="22" viewBox="0 0 30 22"><polyline points="3.5,13 10,19 26.8,3.3" fill="none" stroke="#cccccc" stroke-width="2.5" stroke-linecap="round" stroke-linejoin="round"/></svg><span id="t58" class="s " style="left:1771.30px;top:644.70px;font-size:30.24px;color:#a3a3a3;letter-spacing:-0.586px;">Updated FishCharacter.tsx and FlashLyrics.tsx, checked index.tsx</span><span id="t59" class="s " style="left:1713.30px;top:723.07px;font-size:32.76px;color:#d6d6d6;letter-spacing:-0.180px;">All errors resolved. Let me start the dev server to preview:</span><svg style="left:1724.7px;top:819.7px;" width="30" height="22" viewBox="0 0 30 22"><polyline points="3.5,13 10,19 26.8,3.3" fill="none" stroke="#cccccc" stroke-width="2.5" stroke-linecap="round" stroke-linejoin="round"/></svg><span id="t60" class="s " style="left:1771.30px;top:818.40px;font-size:30.24px;color:#a3a3a3;letter-spacing:0.152px;">Checked background terminal output</span><div style="left:1673px;top:88px;width:1377px;height:144px;background:#181818;"></div><span id="t61" class="s " style="left:1723.00px;top:120.34px;font-size:27.72px;color:#d7d7d7;letter-spacing:-1.556px;">CHAT</span><div style="left:1718px;top:158.8px;width:77px;height:2.5px;background:#3478d4;"></div><svg style="left:2650.6px;top:113.80000000000001px;" width="34" height="34" viewBox="0 0 34 34"><path d="M17.0 2 V32 M2 17.0 H32" stroke="#cccccc" stroke-width="3" stroke-linecap="round" fill="none"/></svg><svg style="left:2699.1000000000004px;top:126.44999999999999px;" width="20.4" height="12.1" viewBox="0 0 20.4 12.1"><polyline points="2,2 10.2,10.1 18.4,2" fill="none" stroke="#cccccc" stroke-width="2.4" stroke-linecap="round" stroke-linejoin="round"/></svg><svg style="left:2747px;top:112px;" width="40" height="40" viewBox="0 0 40 40"><path d="M16.07 8.59 L17.05 4.07 L22.95 4.07 L23.93 8.59 Q25.19 11.01 27.92 10.89 L32.32 9.48 L35.27 14.59 L31.85 17.70 Q30.38 20.00 31.85 22.30 L35.27 25.41 L32.32 30.52 L27.92 29.11 Q25.19 28.99 23.93 31.41 L22.95 35.93 L17.05 35.93 L16.07 31.41 Q14.81 28.99 12.08 29.11 L7.68 30.52 L4.73 25.41 L8.15 22.30 Q9.62 20.00 8.15 17.70 L4.73 14.59 L7.68 9.48 L12.08 10.89 Q14.81 11.01 16.07 8.59 Z" fill="none" stroke="#cccccc" stroke-width="2.9" stroke-linejoin="round"/><circle cx="20" cy="20" r="4.2" fill="none" stroke="#cccccc" stroke-width="2.9"/></svg><svg style="left:2818.2999999999997px;top:127.69999999999999px;" width="28.6" height="8.0" viewBox="0 0 28.6 8.0"><circle cx="4.0" cy="4.0" r="3.0" fill="#cccccc"/><circle cx="14.3" cy="4.0" r="3.0" fill="#cccccc"/><circle cx="24.6" cy="4.0" r="3.0" fill="#cccccc"/></svg><div style="left:2880.3px;top:112.5px;width:2.6px;height:39.5px;background:#6a6a6a;border-radius:1.3px;"></div><svg style="left:2914.3px;top:115.8px;" width="34" height="33" viewBox="0 0 34 33"><g fill="none" stroke="#cccccc" stroke-width="2.9" stroke-linecap="round" stroke-linejoin="round"><path d="M2.5 10.5 V6.5 a4 4 0 0 1 4 -4 H10.5 M23 2.5 H27 a4 4 0 0 1 4 4 V10.5 M31 21.5 V26 a4 4 0 0 1 -4 4 H23 M10.5 30 H6.5 a4 4 0 0 1 -4 -4 V21.5"/></g></svg><svg style="left:2984.3px;top:120.19999999999999px;" width="24" height="24" viewBox="0 0 24 24"><path d="M2 2 L22 22 M22 2 L2 22" stroke="#cccccc" stroke-width="2.8" stroke-linecap="round" fill="none"/></svg><svg style="left:1724.55px;top:191.15px;" width="31.3" height="26.3" viewBox="0 0 31.3 26.3"><path d="M29.3 13.15 H3 M14.15 2 L3 13.15 L14.15 24.3" fill="none" stroke="#cccccc" stroke-width="2.7" stroke-linecap="round" stroke-linejoin="round"/></svg><span id="t62" class="s " style="left:1777.00px;top:192.64px;font-size:27.72px;color:#d7d7d7;font-weight:700;font-family:'Liberation Sans','Noto Sans CJK SC',sans-serif;letter-spacing:-0.401px;">中文RAP歌词动态显示设计</span><svg style="left:2977.3px;top:186.3px;" width="37" height="37" viewBox="0 0 37 37"><rect x="2.2" y="2.2" width="31.5" height="31.3" rx="6" fill="none" stroke="#cccccc" stroke-width="3"/><path d="M22.5 2.2 V33.5" stroke="#cccccc" stroke-width="3"/></svg><div style="left:3029px;top:562.3px;width:21px;height:609px;background:#404040;"></div><div style="left:1713.8px;top:886.2px;width:1300px;height:251.6px;background:#191919;border:2px solid #333333;border-radius:10px;box-sizing:border-box;"></div><div style="left:1715.8px;top:975.6px;width:1296px;height:79.4px;background:#1e1e1e;"></div><div style="left:1715.8px;top:973.6px;width:1296px;height:2px;background:#333333;"></div><div style="left:1715.8px;top:1055px;width:1296px;height:2px;background:#333333;"></div><svg style="left:1739px;top:915.3px;" width="30.5" height="31.4" viewBox="0 0 36 37"><g fill="none" stroke="#cccccc" stroke-width="2.9" stroke-linecap="round" stroke-linejoin="round"><path d="M7.4 3.6 A7.4 7.4 0 0 0 7.7 17.4 V32 a2.1 2.1 0 0 0 4.2 0 V17.4 A7.4 7.4 0 0 0 12.2 3.6 V9.7 H7.4 Z"/><path d="M26.4 2.8 h3.4 v14.5 h-3.4 z"/><rect x="22.6" y="18.6" width="11" height="15.6" rx="5.3"/></g></svg><span id="t63" class="s " style="left:1780.00px;top:915.67px;font-size:32.76px;color:#d6d6d6;letter-spacing:-0.082px;">Open untrusted web page?</span><span id="t64" class="s " style="left:1738.30px;top:1001.07px;font-size:32.76px;color:#4a9ff5;letter-spacing:0.325px;">http://localhost:3000</span><div style="left:1738px;top:1071.5px;width:145px;height:52.3px;background:#3478d4;border-radius:10px;"></div><span id="t65" class="s " style="left:1759.00px;top:1083.20px;font-size:30.24px;color:#ffffff;letter-spacing:0.292px;">Allow</span><div style="left:1838px;top:1084px;width:2px;height:27px;background:rgba(255,255,255,.45);"></div><svg style="left:1852.8px;top:1093.2px;" width="15.4" height="9.6" viewBox="0 0 15.4 9.6"><polyline points="2,2 7.7,7.6 13.4,2" fill="none" stroke="#ffffff" stroke-width="2.4" stroke-linecap="round" stroke-linejoin="round"/></svg><div style="left:1893px;top:1071.5px;width:84.5px;height:52px;background:#191919;border:2px solid #3a3a3a;border-radius:10px;box-sizing:border-box;"></div><span id="t66" class="s " style="left:1913.00px;top:1083.20px;font-size:30.24px;color:#cccccc;letter-spacing:-0.661px;">Skip</span><svg style="left:1872px;top:1031px;" width="30" height="17" viewBox="0 0 30 17"><path d="M2 15.5 L15 2.5 L28 15.5" fill="#202020" stroke="#454545" stroke-width="2"/></svg><div style="left:1729.5px;top:1044.5px;width:320.5px;height:61px;background:#202020;border:2px solid #454545;border-radius:12px;box-sizing:border-box;box-shadow:0 4px 14px rgba(0,0,0,.5);"></div><svg style="left:1874px;top:1041px;" width="26" height="8" viewBox="0 0 26 8"><path d="M1.5 8 L13 -3.5 L24.5 8 Z" fill="#202020"/></svg><span id="t67" class="s " style="left:1751.30px;top:1061.50px;font-size:30.24px;color:#cccccc;letter-spacing:0.299px;">http://localhost:3000</span><div style="left:1703.8px;top:1192.5px;width:1318.2px;height:610.5px;background:#1f1f1f;border:2px solid #383838;border-radius:11px;box-sizing:border-box;overflow:hidden;"><div style="left:0;top:381px;width:1320px;height:230px;background:#313131;"></div><div style="left:0;top:302.2px;width:1320px;height:2px;background:#383838;"></div><div style="left:0;top:380px;width:1320px;height:2px;background:#3a3a3a;"></div></div><svg style="left:1727.0px;top:1224.5px;" width="26.4" height="15.6" viewBox="0 0 26.4 15.6"><polyline points="2,2 13.2,13.6 24.4,2" fill="none" stroke="#cccccc" stroke-width="2.4" stroke-linecap="round" stroke-linejoin="round"/></svg><span id="t68" class="s " style="left:1768.00px;top:1218.40px;font-size:30.24px;color:#cccccc;letter-spacing:-0.164px;">Todos (4/4)</span><svg style="left:2958.5px;top:1211.5px;" width="40" height="36" viewBox="0 0 40 36"><g fill="none" stroke="#cccccc" stroke-width="3" stroke-linecap="round"><path d="M3.5 3.5 L16 16 M16 3.5 L3.5 16 M21.5 9 H37 M21.5 16.5 H37 M9 24.5 H37 M9 32 H37"/></g></svg><svg style="left:1721.5px;top:1273.0px;" width="38" height="38" viewBox="0 0 38 38"><circle cx="19" cy="19" r="16" fill="none" stroke="#89d185" stroke-width="3"/><polyline points="11.5,19.5 16.8,24.8 27,14.3" fill="none" stroke="#89d185" stroke-width="3" stroke-linecap="round" stroke-linejoin="round"/></svg><span id="t69" class="s " style="left:1776.30px;top:1277.67px;font-size:32.76px;color:#d6d6d6;letter-spacing:-0.383px;">Create FishCharacter component</span><svg style="left:1721.5px;top:1328.4px;" width="38" height="38" viewBox="0 0 38 38"><circle cx="19" cy="19" r="16" fill="none" stroke="#89d185" stroke-width="3"/><polyline points="11.5,19.5 16.8,24.8 27,14.3" fill="none" stroke="#89d185" stroke-width="3" stroke-linecap="round" stroke-linejoin="round"/></svg><span id="t70" class="s " style="left:1776.30px;top:1333.07px;font-size:32.76px;color:#d6d6d6;letter-spacing:-0.483px;">Create FlashLyrics component</span><svg style="left:1721.5px;top:1383.8000000000002px;" width="38" height="38" viewBox="0 0 38 38"><circle cx="19" cy="19" r="16" fill="none" stroke="#89d185" stroke-width="3"/><polyline points="11.5,19.5 16.8,24.8 27,14.3" fill="none" stroke="#89d185" stroke-width="3" stroke-linecap="round" stroke-linejoin="round"/></svg><span id="t71" class="s " style="left:1776.30px;top:1388.47px;font-size:32.76px;color:#d6d6d6;letter-spacing:-0.315px;">Create main FishRap composition</span><svg style="left:1721.5px;top:1439.2px;" width="38" height="38" viewBox="0 0 38 38"><circle cx="19" cy="19" r="16" fill="none" stroke="#89d185" stroke-width="3"/><polyline points="11.5,19.5 16.8,24.8 27,14.3" fill="none" stroke="#89d185" stroke-width="3" stroke-linecap="round" stroke-linejoin="round"/></svg><span id="t72" class="s " style="left:1776.30px;top:1443.87px;font-size:32.76px;color:#d6d6d6;letter-spacing:-0.091px;">Register composition in Root.tsx</span><svg style="left:1733.2px;top:1525.45px;" width="15.6" height="25.9" viewBox="0 0 15.6 25.9"><polyline points="2,2 13.6,12.95 2,23.9" fill="none" stroke="#cccccc" stroke-width="2.4" stroke-linecap="round" stroke-linejoin="round"/></svg><span id="t73" class="s " style="left:1768.00px;top:1524.80px;font-size:30.24px;color:#cccccc;letter-spacing:-0.186px;">4 files changed</span><span id="t74" class="s sb1" style="left:1986.50px;top:1526.94px;font-size:27.72px;color:#6eb56c;letter-spacing:0.391px;">+800</span><span id="t75" class="s sb2" style="left:2061.50px;top:1526.94px;font-size:27.72px;color:#f0706c;letter-spacing:-0.078px;">-3</span><div style="left:2725px;top:1508.8px;width:95px;height:54.4px;background:#3478d4;border-radius:10px;"></div><span id="t76" class="s " style="left:2742.60px;top:1524.34px;font-size:27.72px;color:#ffffff;letter-spacing:-0.835px;">Keep</span><div style="left:2835px;top:1508.8px;width:102px;height:54.4px;border:2px solid #3a3a3a;border-radius:10px;box-sizing:border-box;"></div><span id="t77" class="s " style="left:2852.50px;top:1524.34px;font-size:27.72px;color:#cccccc;letter-spacing:0.251px;">Undo</span><div style="left:2952px;top:1508.8px;width:54px;height:54.4px;border:2px solid #3a3a3a;border-radius:10px;box-sizing:border-box;"></div><svg style="left:2961.5px;top:1514.5px;" width="40" height="44" viewBox="0 0 40 44"><g fill="none" stroke="#cccccc" stroke-width="2.8" stroke-linecap="round" stroke-linejoin="round">
<path d="M7 3 H18.5 L29 13.5 V32 a3.8 3.8 0 0 1 -3.8 3.8 H7 a3.8 3.8 0 0 1 -3.8 -3.8 V6.8 a3.8 3.8 0 0 1 3.8 -3.8 Z"/>
<path d="M16 10 V20 M11 15 H21 M11 27 H21"/><path d="M33.6 15.5 V33.5 a6.5 6.5 0 0 1 -6.5 6.5 H10.5" stroke-width="3.8" stroke-linecap="butt"/></g></svg><div style="left:1720.5px;top:1592px;width:59px;height:47.5px;border:2px solid #484848;border-radius:10px;box-sizing:border-box;"></div><svg style="left:1720px;top:1590px;" width="60" height="50" viewBox="0 0 60 50"><g transform="translate(17.6,26.1) rotate(-43)"><path d="M0 0 H14.7 A6.65 6.65 0 0 1 14.7 13.3 H-1.1 A3.3 3.3 0 0 1 -1.1 6.7 H16.4" fill="none" stroke="#d0d0d0" stroke-width="2.6" stroke-linecap="round"/></g></svg><div style="left:1790px;top:1592px;width:307.5px;height:47.5px;border:2px dashed #585858;border-radius:10px;box-sizing:border-box;"></div><svg style="left:1802.5px;top:1602.0px;" width="25" height="25" viewBox="0 0 25 25"><path d="M12.5 2 V23 M2 12.5 H23" stroke="#bdbdbd" stroke-width="2.6" stroke-linecap="round" fill="none"/></svg><svg style="left:1841.05px;top:1600.25px;" width="28.5" height="28.5" viewBox="-14.75 -14.75 28.5 28.5"><ellipse cx="0" cy="0" rx="12.75" ry="5.29" transform="rotate(0)" fill="none" stroke="#5596b9" stroke-width="1.6"/><ellipse cx="0" cy="0" rx="12.75" ry="5.29" transform="rotate(60)" fill="none" stroke="#5596b9" stroke-width="1.6"/><ellipse cx="0" cy="0" rx="12.75" ry="5.29" transform="rotate(120)" fill="none" stroke="#5596b9" stroke-width="1.6"/></svg><span id="t78" class="s " style="left:1885.00px;top:1604.34px;font-size:27.72px;color:#bdbdbd;font-style:italic;letter-spacing:-0.953px;">FishCharacter.tsx</span><span id="t79" class="s " style="left:1720.50px;top:1670.67px;font-size:32.76px;color:#8f8f8f;letter-spacing:0.095px;">Describe what to build next</span><svg style="left:1735px;top:1744px;" width="31" height="30" viewBox="0 0 31 30"><g fill="none" stroke="#cccccc" stroke-width="2.6" stroke-linejoin="round" stroke-linecap="round"><rect x="2.5" y="2.5" width="25.5" height="18.5" rx="3"/><path d="M10.5 21 V27 M20 21 V27 M6.5 27.5 H24"/></g></svg><svg style="left:1785.6499999999999px;top:1754.0px;" width="19.9" height="11.6" viewBox="0 0 19.9 11.6"><polyline points="2,2 9.95,9.6 17.9,2" fill="none" stroke="#cccccc" stroke-width="2.6" stroke-linecap="round" stroke-linejoin="round"/></svg><svg style="left:1844px;top:1744px;" width="34" height="30" viewBox="0 0 34 30"><g fill="none" stroke="#cccccc" stroke-width="2.6" stroke-linejoin="round" stroke-linecap="round"><path d="M13 2.5 H10 L3 15 L10 27.5 H13 M19.5 2.5 H24 L31 15 L24 27.5 H21 M19.5 2.5 L13.5 27.5"/></g></svg><svg style="left:1896.6499999999999px;top:1754.0px;" width="19.9" height="11.6" viewBox="0 0 19.9 11.6"><polyline points="2,2 9.95,9.6 17.9,2" fill="none" stroke="#cccccc" stroke-width="2.6" stroke-linecap="round" stroke-linejoin="round"/></svg><span id="t80" class="s " style="left:1957.00px;top:1745.94px;font-size:27.72px;color:#cccccc;letter-spacing:-0.522px;">Claude Opus 4.6</span><svg style="left:2167.55px;top:1754.0px;" width="19.9" height="11.6" viewBox="0 0 19.9 11.6"><polyline points="2,2 9.95,9.6 17.9,2" fill="none" stroke="#cccccc" stroke-width="2.6" stroke-linecap="round" stroke-linejoin="round"/></svg><svg style="left:2221px;top:1740.5px;" width="36" height="37" viewBox="0 0 36 37"><g fill="none" stroke="#cccccc" stroke-width="2.8" stroke-linecap="round" stroke-linejoin="round"><path d="M7.4 3.6 A7.4 7.4 0 0 0 7.7 17.4 V32 a2.1 2.1 0 0 0 4.2 0 V17.4 A7.4 7.4 0 0 0 12.2 3.6 V9.7 H7.4 Z"/><path d="M26.4 2.8 h3.4 v14.5 h-3.4 z"/><rect x="22.6" y="18.6" width="11" height="15.6" rx="5.3"/></g></svg><svg style="left:2959.05px;top:1739.25px;" width="36.5" height="36.5" viewBox="0 0 36.5 36.5"><path d="M18.25 2 V34.5 M2 18.25 H34.5" stroke="#8c8c8c" stroke-width="2.8" stroke-linecap="round" fill="none"/></svg><div style="left:0px;top:1835px;width:3053px;height:2px;background:#2b2b2b;"></div><div style="left:0px;top:1837px;width:3053px;height:52px;background:#181818;"></div><svg style="left:24px;top:1843px;" width="34" height="40" viewBox="0 0 34 40"><g fill="none" stroke="#cccccc" stroke-width="2.6" stroke-linecap="round" stroke-linejoin="round"><polyline points="4,14.3 16,24.3 4,34.3"/><polyline points="28.5,4.3 17.5,14.3 28.5,24.3"/></g></svg><svg style="left:103px;top:1840px;" width="42" height="44" viewBox="0 0 42 44"><g fill="none" stroke="#cccccc" stroke-width="2.6" stroke-linecap="round">
<circle cx="8.7" cy="7.5" r="4.8"/><circle cx="8.7" cy="36.5" r="4.8"/><path d="M8.7 12.5 V31.5"/>
</g><path d="M22.2 21 V15.8 a4.3 4.3 0 0 1 8.6 0 V21" fill="none" stroke="#cccccc" stroke-width="3"/>
<circle cx="26.5" cy="31" r="11.2" fill="#cccccc"/>
<g stroke="#181818" stroke-width="2.4" stroke-linecap="round"><path d="M26.5 24.5 V37.5 M20.9 27.7 L32.1 34.3 M32.1 27.7 L20.9 34.3"/></g></svg><span id="t81" class="s " style="left:151.00px;top:1850.60px;font-size:30.24px;color:#cccccc;letter-spacing:0.233px;">main*</span><svg style="left:243px;top:1846px;" width="44" height="40" viewBox="0 0 44 40"><path d="M14.5 28.5 H11.5 a8 8 0 0 1 -1.5 -15.8 a10.5 10.5 0 0 1 20.5 -1.2 a8.5 8.5 0 0 1 3 1.8" fill="none" stroke="#cccccc" stroke-width="2.8" stroke-linecap="round"/>
<circle cx="29" cy="25.5" r="11.5" fill="#cccccc"/><path d="M29 32 V19.5 M23.7 24.5 L29 19.2 L34.3 24.5" fill="none" stroke="#181818" stroke-width="2.6" stroke-linecap="round" stroke-linejoin="round"/></svg><svg style="left:324.5px;top:1843px;" width="38" height="38" viewBox="0 0 38 38"><circle cx="19.2" cy="19.2" r="16.3" fill="none" stroke="#cccccc" stroke-width="2.6"/><path d="M12.7 12.7 L25.7 25.7 M25.7 12.7 L12.7 25.7" stroke="#cccccc" stroke-width="2.6" stroke-linecap="round"/></svg><span id="t82" class="s " style="left:372.30px;top:1850.60px;font-size:30.24px;color:#cccccc;letter-spacing:-0.527px;">0</span><svg style="left:397.5px;top:1843px;" width="40" height="36" viewBox="0 0 40 36"><path d="M17.3 4.2 Q19.5 0.8 21.7 4.2 L36.3 29.3 Q37.8 32.8 34 32.8 H5 Q1.2 32.8 2.7 29.3 Z" fill="none" stroke="#cccccc" stroke-width="2.6" stroke-linejoin="round"/><path d="M19.5 12 V21.5" stroke="#cccccc" stroke-width="2.8" stroke-linecap="round"/><circle cx="19.5" cy="26.7" r="1.9" fill="#cccccc"/></svg><span id="t83" class="s " style="left:445.50px;top:1850.60px;font-size:30.24px;color:#cccccc;letter-spacing:-0.527px;">0</span><div style="left:2063px;top:1837px;width:80px;height:53px;background:#3a3d41;"></div><svg style="left:2083px;top:1843px;" width="38" height="36" viewBox="0 0 38 36"><circle cx="15.5" cy="15" r="12.3" fill="none" stroke="#cccccc" stroke-width="2.6"/><path d="M24.5 24 L34.5 33 M15.5 9.5 V20.5 M10 15 H21" stroke="#cccccc" stroke-width="2.6" stroke-linecap="round"/></svg><span id="t84" class="s " style="left:2164.30px;top:1850.60px;font-size:30.24px;color:#cccccc;letter-spacing:-0.647px;">Ln 1, Col 1</span><span id="t85" class="s " style="left:2342.50px;top:1850.60px;font-size:30.24px;color:#cccccc;letter-spacing:-1.276px;">Spaces: 4</span><span id="t86" class="s " style="left:2505.80px;top:1850.60px;font-size:30.24px;color:#cccccc;letter-spacing:-1.176px;">UTF-8</span><span id="t87" class="s " style="left:2630.00px;top:1849.10px;font-size:30.24px;color:#cccccc;letter-spacing:1.630px;">{ }</span><span id="t88" class="s " style="left:2682.00px;top:1850.60px;font-size:30.24px;color:#cccccc;letter-spacing:-1.103px;">TypeScript JSX</span><svg style="left:2911px;top:1841px;" width="46" height="44" viewBox="0 0 46 44"><g fill="none" stroke="#cccccc" stroke-width="4" stroke-linejoin="round">
<rect x="8" y="5.3" width="12.3" height="13" rx="5.2"/><rect x="24.3" y="5.3" width="12.3" height="13" rx="5.2"/></g>
<rect x="18" y="7" width="8" height="5" fill="#cccccc"/>
<path d="M6.5 16 C3 18.5 2 22 2 25 C3 31 10 36 18.5 38.6 L18.5 34 C14 32.5 10.3 31 10.3 29 L10.3 19.5 Z" fill="#cccccc"/>
<circle cx="31.3" cy="29.7" r="13.8" fill="#181818"/>
<circle cx="31.3" cy="29.7" r="11.7" fill="#cccccc"/>
<g fill="none" stroke="#181818" stroke-width="2.6" stroke-linecap="butt" stroke-linejoin="miter"><path d="M25.8 28 a5.8 5.8 0 0 1 10 -2.6 M36.8 31.4 a5.8 5.8 0 0 1 -10 2.6"/></g>
<path d="M37.6 21.8 V27.3 H32.1 Z M25 37.6 V32.1 H30.5 Z" fill="#181818"/></svg><svg style="left:2996px;top:1840.7px;" width="36" height="42" viewBox="0 0 36 42"><g fill="none" stroke="#cccccc" stroke-width="2.7" stroke-linejoin="round" stroke-linecap="round"><path d="M6.8 16.8 a11.2 11.8 0 0 1 22.4 0 V24 L33 32.5 H3 L6.8 24 Z"/><path d="M13.5 33.5 a4.6 4.6 0 0 0 9 0"/></g></svg></div></body></html>
